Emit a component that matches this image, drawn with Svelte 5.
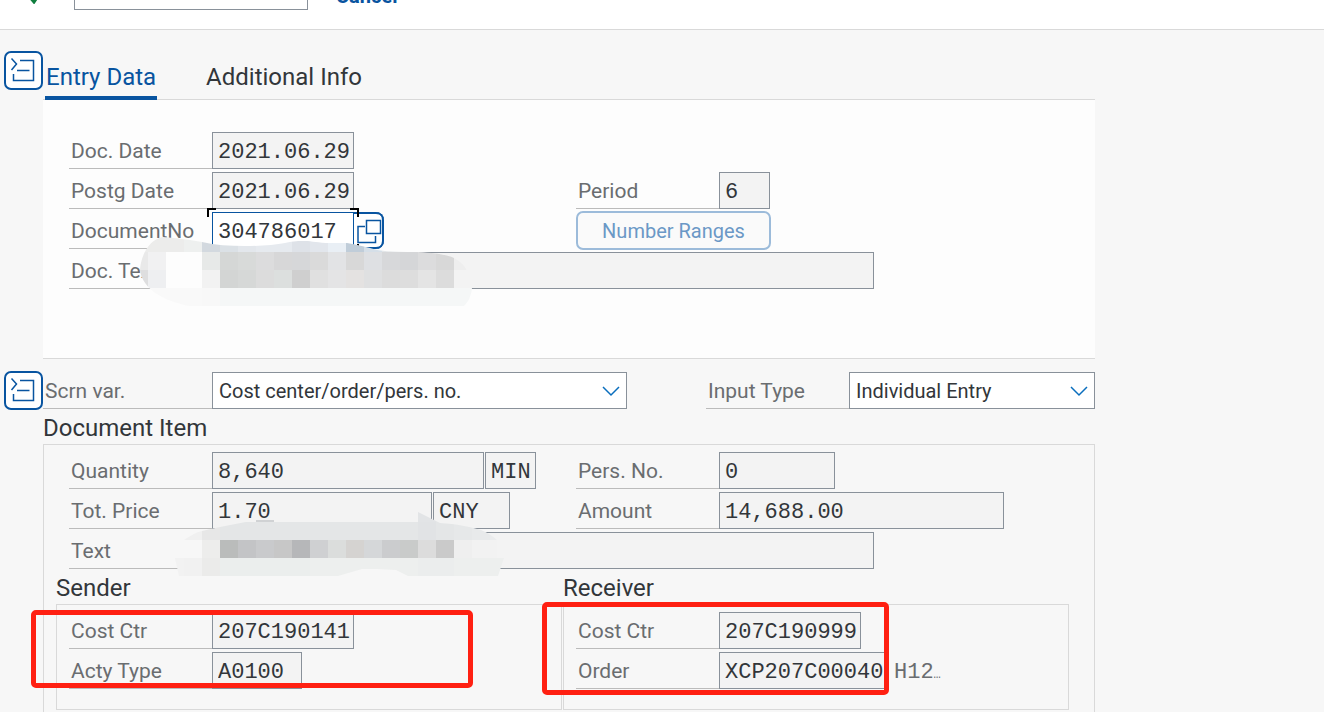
<script lang="ts">
  let activeTab = $state("entry");

  const cell = 18;

  const docTextMask = [
    ["#ececeb", "#ececeb", "#ececeb", "#eef0ef", "#d3d9df", "#dbe1e6", "#e3e7ec", "#e6eaef", "#e6eaef", "#dee2e8", "#e2e6ec", "#e9eff5", "#c0cdd9", "#d5dfe8", "#e3e6e8", "#e3e6e8", "#e3e6e8", "#e3e6e8", "#e3e6e8"],
    ["#e9e9e9", "#f1f1f2", "#fdfdfd", "#fdfdfd", "#e7e9e8", "#d5d7d6", "#d8dad9", "#dcdcdd", "#d7d7d8", "#d6d7d9", "#dadada", "#e2e3e5", "#d8d8d8", "#dee0e3", "#d7d8da", "#d5d6d8", "#dcdcdd", "#d8d8d8", "#eeeeee"],
    ["#dededf", "#eeeff1", "#fdfdfd", "#fdfdfd", "#f2f2f2", "#d3d5d4", "#d6d8d7", "#dcdcdc", "#dcdfde", "#cfcfcf", "#e0e0e0", "#e4e4e5", "#e4e2e1", "#dfe0e1", "#dcdcdc", "#dddddd", "#e4e4e4", "#dcdcdc", "#f3f3f3"],
    ["#f9f9f9", "#f9f9f9", "#f9f9f9", "#f9f9f9", "#f8f8f8", "#f5f7f7", "#f5f7f7", "#f5f7f7", "#f5f7f7", "#f5f7f7", "#f5f7f7", "#f5f7f7", "#f5f7f7", "#f5f7f7", "#f5f7f7", "#f5f7f7", "#f5f7f7", "#f5f7f7", "#f5f7f7"],
  ];

  const itemTextMask = [
    ["", "", "", "", "", "#d0d2d4", "", "", "", "", "", "", "", "", "#e2e4e6", "#e4e6e7", "", "", ""],
    ["", "#f0f0f0", "#e7e7e7", "#e4e6e7", "#e4e6e7", "#e4e6e7", "#e4e6e7", "#e4e6e7", "#e4e6e7", "#e4e6e7", "#e4e6e7", "#e4e6e7", "#e4e6e7", "#e4e6e7", "#e1e3e5", "#e4e6e7", "#e6e8e9", "#e8eaeb", "#ebeced"],
    ["", "#f7f7f7", "#ededec", "#babcbb", "#c3c4c6", "#c9cacc", "#c7c7c7", "#b6b7b9", "#cfd0d2", "#dbdddc", "#d5d3d1", "#d5d7d9", "#cbccce", "#c9cbca", "#dcdcdc", "#cacaca", "#efefef", "#f2f2f2", "#f2f2f2"],
    ["#f2f2f2", "#f1f1f1", "#ebebea", "#ebeeed", "#ebeeed", "#ebeeed", "#ebeeed", "#ebeeed", "#edefee", "#edefee", "#edefee", "#edefee", "#edefee", "#edefee", "#ebeded", "#ebeded", "#edefee", "#edefee", "#edefee"],
  ];
</script>

{#snippet collapseIcon()}
  <svg width="35" height="35" viewBox="0 0 35 35" aria-hidden="true">
    <path d="M5.500 5.500l5 5.500-5 6M14 7.500h13.500v20h-20V21M11 17.500h12.500" fill="none" stroke="#0854a0" stroke-width="1.5" />
  </svg>
{/snippet}

{#snippet chevron()}
  <svg class="chevron" width="18" height="11" viewBox="0 0 18 11" aria-hidden="true">
    <path d="M1 1l8 8 8-8" fill="none" stroke="#0a6ebd" stroke-width="1.5" />
  </svg>
{/snippet}

{#snippet mosaic(rows: string[][])}
  {#each rows as row, y}
    {#each row as color, x}
      {#if color}
        <rect x={x * cell} y={y * cell} width={cell} height={cell} fill={color} />
      {/if}
    {/each}
  {/each}
{/snippet}

<div class="page">
  <header class="toolbar">
    <svg width="16" height="16" viewBox="0 0 16 16" aria-hidden="true">
      <path d="M2 7l6 7 6-9" fill="none" stroke="#107e3e" stroke-width="3" />
    </svg>
    <input class="command" aria-label="Command" />
    <button type="button" class="cancel">Cancel</button>
  </header>

  <section class="block">
    <button type="button" class="collapse" aria-label="Collapse entry data">{@render collapseIcon()}</button>
    <div class="content">
      <nav class="tabs">
        <button type="button" class:active={activeTab === "entry"} onclick={() => (activeTab = "entry")}>Entry Data</button>
        <button type="button" class:active={activeTab === "info"} onclick={() => (activeTab = "info")}>Additional Info</button>
      </nav>
      <div class="panel">
        <div class="row">
          <div class="pair">
            <label for="doc-date">Doc. Date</label>
            <input id="doc-date" class="w10" value="2021.06.29" readonly />
          </div>
        </div>
        <div class="row">
          <div class="pair">
            <label for="post-date">Postg Date</label>
            <input id="post-date" class="w10" value="2021.06.29" readonly />
          </div>
          <div class="pair">
            <label for="period">Period</label>
            <input id="period" class="w3" value="6" readonly />
          </div>
        </div>
        <div class="row">
          <div class="pair">
            <label for="doc-no">DocumentNo</label>
            <div class="focus">
              <input id="doc-no" class="w10 editable" value="304786017" />
              <button type="button" class="help" aria-label="Value help">
                <svg width="30" height="37" viewBox="0 0 30 37" aria-hidden="true">
                  <path d="M12.500 8.500h14v13h-14zM11 14.500H4v16h17.500V24" fill="none" stroke="#0854a0" stroke-width="1.5" />
                </svg>
              </button>
              <svg class="corners" width="152" height="45" viewBox="0 0 152 45" aria-hidden="true">
                <path d="M1 9V1h8M143 1h8v8M1 36v8h8M143 44h8v-8" fill="none" stroke="#000" stroke-width="2" />
              </svg>
            </div>
          </div>
          <button type="button" class="ranges">Number Ranges</button>
        </div>
        <div class="row wide">
          <label for="doc-text">Doc. Text</label>
          <input id="doc-text" class="w50" readonly />
          <svg class="mask doc-mask" width="342" height="72" viewBox="0 0 342 72" aria-hidden="true">
            <clipPath id="doc-clip">
              <path d="M10 36C11 20 20 5 33 3C48 4 60 6 72 8C85 11 100 12 115 12S145 11 155 9 168 7 175 7 188 9 200 9H217C228 11 238 13 247 16C260 18 275 18 288 18C305 19 318 21 324 24C330 27 334 31 336 35L342 54C341 63 338 68 334 72H60C35 68 12 55 10 36z" />
            </clipPath>
            <g clip-path="url(#doc-clip)">{@render mosaic(docTextMask)}</g>
          </svg>
        </div>
      </div>
    </div>
  </section>

  <section class="block">
    <button type="button" class="collapse" aria-label="Collapse items">{@render collapseIcon()}</button>
    <div class="content item">
      <div class="variants">
        <div class="pair">
          <label for="variant" class="long">Scrn var.</label>
          <div class="select variant">
            <select id="variant"><option>Cost center/order/pers. no.</option></select>
            {@render chevron()}
          </div>
        </div>
        <div class="pair">
          <label for="input-type">Input Type</label>
          <div class="select type">
            <select id="input-type"><option>Individual Entry</option></select>
            {@render chevron()}
          </div>
        </div>
      </div>

      <h2>Document Item</h2>
      <div class="box">
        <div class="fields">
          <div class="row">
            <div class="pair">
              <label for="quantity">Quantity</label>
              <input id="quantity" class="w20" value="8,640" readonly />
              <input class="w3 unit" aria-label="Unit" value="MIN" readonly />
            </div>
            <div class="pair">
              <label for="pers-no">Pers. No.</label>
              <input id="pers-no" class="w8" value="0" readonly />
            </div>
          </div>
          <div class="row">
            <div class="pair">
              <label for="price">Tot. Price</label>
              <input id="price" class="w16" value="1.70" readonly />
              <input class="w5 unit" aria-label="Currency" value="CNY" readonly />
            </div>
            <div class="pair">
              <label for="amount">Amount</label>
              <input id="amount" class="w21" value="14,688.00" readonly />
            </div>
          </div>
          <div class="row wide">
            <label for="item-text">Text</label>
            <input id="item-text" class="w50" readonly />
            <svg class="mask item-mask" width="342" height="72" viewBox="0 0 342 72" aria-hidden="true">
              <clipPath id="item-clip">
                <path d="M18 36C24 32 30 28 36 27L54 23C66 21 78 18 90 16H108V18H252V8L266 15 274 19C290 20 305 23 315 26C322 29 327 32 331 36V54H338L332 72H242L230 66C216 65 205 65 196 65L172 72H13L9 54H18z" />
              </clipPath>
              <g clip-path="url(#item-clip)">{@render mosaic(itemTextMask)}</g>
            </svg>
          </div>
        </div>

        <div class="parties">
          <div>
            <h2>Sender</h2>
            <div class="party">
              <div class="pair">
                <label for="sender-ctr">Cost Ctr</label>
                <input id="sender-ctr" class="w10" value="207C190141" readonly />
              </div>
              <div class="pair">
                <label for="activity">Acty Type</label>
                <input id="activity" class="w6" value="A0100" readonly />
              </div>
              <div class="marker sender-marker"></div>
            </div>
          </div>
          <div>
            <h2>Receiver</h2>
            <div class="party">
              <div class="pair">
                <label for="receiver-ctr">Cost Ctr</label>
                <input id="receiver-ctr" class="w10" value="207C190999" readonly />
              </div>
              <div class="pair">
                <label for="order">Order</label>
                <input id="order" class="w12" value="XCP207C00040" readonly />
                <span class="note">H12<small>…</small></span>
              </div>
              <div class="marker receiver-marker"></div>
            </div>
          </div>
        </div>
      </div>
    </div>
  </section>
</div>

<style>
  :global(body) {
    background: #f7f7f7;
  }

  .page {
    height: 100vh;
    overflow: hidden;
    background: #f7f7f7;
    color: #32363a;
    font-family: Roboto, "Liberation Sans", sans-serif;
    font-size: 20px;
  }

  .page * {
    box-sizing: border-box;
  }

  button,
  input,
  select {
    margin: 0;
    font: inherit;
    color: inherit;
  }

  button {
    padding: 0;
    border: 0;
    background: none;
    color: #0854a0;
  }

  .toolbar {
    display: flex;
    align-items: flex-end;
    height: 30px;
    padding: 0 26px 19px;
    overflow: hidden;
    border-bottom: 1px solid #d9d9d9;
    background: #fff;
  }

  .toolbar svg {
    flex: none;
    margin-bottom: 6px;
  }

  .toolbar .command {
    width: 234px;
    margin: 0 28px 0 32px;
    background: #fff;
  }

  .cancel {
    font-weight: 700;
    line-height: 28px;
  }

  .block {
    display: flex;
    align-items: flex-start;
    max-width: 1095px;
    padding-left: 4px;
  }

  .block:nth-of-type(1) {
    margin-top: 21px;
  }

  .block:nth-of-type(2) {
    margin-top: 12px;
  }

  .collapse {
    flex: none;
    width: 39px;
    height: 39px;
    border: 2px solid #0854a0;
    border-radius: 7px;
    background: #fff;
  }

  .collapse svg {
    display: block;
  }

  .content {
    flex: 1;
    min-width: 0;
  }

  .tabs {
    display: flex;
    gap: 48px;
    height: 49px;
    padding-left: 2px;
    border-bottom: 1px solid #d9d9d9;
    font-size: 24px;
  }

  .tabs button {
    height: 49px;
    padding: 6px 1px 0;
    border-bottom: 4px solid transparent;
    color: #32363a;
  }

  .tabs .active {
    border-color: #0854a0;
    color: #0854a0;
  }

  .panel {
    display: grid;
    gap: 3px;
    padding: 32px 26px 69px;
    border-bottom: 1px solid #d9d9d9;
    background: #fdfdfd;
  }

  .row {
    display: grid;
    grid-template-columns: 507px 1fr;
    grid-template-rows: 37px;
    align-items: center;
    height: 37px;
  }

  .wide {
    display: flex;
    position: relative;
  }

  .pair {
    display: flex;
    height: 37px;
  }

  label {
    flex: none;
    width: 143px;
    height: 37px;
    padding-left: 2px;
    border-bottom: 1px solid #bbb;
    color: #6a6d70;
    font-size: 21px;
    line-height: 38px;
    white-space: nowrap;
  }

  .long {
    width: 169px;
  }

  input {
    height: 37px;
    padding: 4px 0 0 5px;
    border: 1px solid #89919a;
    border-radius: 0;
    outline: 0;
    background: #f3f3f3;
    font-family: "Liberation Mono", monospace;
    font-size: 22px;
  }

  .w3 { width: 51px; }
  .w5 { width: 77px; }
  .w6 { width: 90px; }
  .w8 { width: 116px; }
  .w10 { width: 142px; }
  .w12 { width: 168px; }
  .w16 { width: 220px; }
  .w20 { width: 272px; }
  .w21 { width: 285px; }
  .w50 { width: 662px; }

  .unit {
    margin-left: 1px;
  }

  .focus {
    display: flex;
    position: relative;
  }

  .editable {
    border-color: #0854a0;
    background: #fff;
  }

  .help {
    width: 30px;
    height: 37px;
    overflow: hidden;
    border-radius: 0 8px 8px 0;
    box-shadow: inset -2px 0 #0854a0, inset 0 2px #0854a0, inset 0 -2px #0854a0;
    background: #fff;
  }

  .help svg {
    display: block;
  }

  .corners {
    position: absolute;
    top: -4px;
    left: -5px;
    pointer-events: none;
  }

  .ranges {
    width: 195px;
    height: 39px;
    border: 2px solid #9cbbda;
    border-radius: 7px;
    background: #fafafa;
    color: #6b98c6;
  }

  .mask {
    position: absolute;
    pointer-events: none;
  }

  .doc-mask {
    top: -18px;
    left: 61px;
  }

  .item-mask {
    top: -28px;
    left: 97px;
  }

  .item {
    padding-top: 1px;
  }

  .variants {
    display: flex;
    justify-content: space-between;
  }

  .select {
    position: relative;
  }

  .variant {
    width: 415px;
  }

  .type {
    width: 246px;
  }

  select {
    width: 100%;
    height: 37px;
    padding: 0 36px 0 6px;
    border: 1px solid #89919a;
    border-radius: 0;
    appearance: none;
    background: #fff;
  }

  .chevron {
    position: absolute;
    top: 14px;
    right: 7px;
    pointer-events: none;
  }

  h2 {
    margin: 0;
    padding-top: 4px;
    font-size: 24px;
    font-weight: 400;
    line-height: 31px;
  }

  .box {
    padding: 7px 25px 12px 12px;
    border: 1px solid #d9d9d9;
  }

  .fields {
    display: grid;
    gap: 3px;
    padding-left: 13px;
  }

  .parties {
    display: grid;
    grid-template-columns: 1fr 1fr;
    gap: 1px;
  }

  .party {
    display: grid;
    gap: 3px;
    position: relative;
    padding: 7px 12px 20px;
    border: 1px solid #d9d9d9;
  }

  .note {
    padding: 2px 0 0 7px;
    color: #6a6d70;
    font-family: "Liberation Mono", monospace;
    font-size: 22px;
    line-height: 37px;
  }

  .note small {
    font-size: 12px;
  }

  .marker {
    position: absolute;
    border: 5px solid #ff2012;
    border-radius: 5px;
    pointer-events: none;
  }

  .sender-marker {
    top: 5px;
    left: -26px;
    width: 442px;
    height: 78px;
  }

  .receiver-marker {
    top: -3px;
    left: -22px;
    width: 347px;
    height: 93px;
  }
</style>
